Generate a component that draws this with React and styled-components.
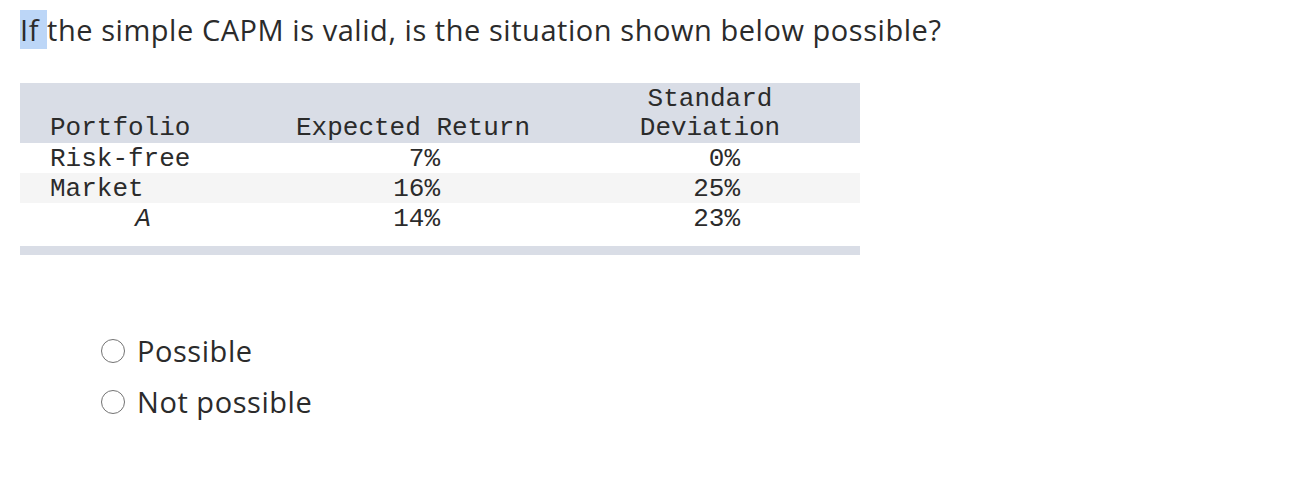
import styled, { createGlobalStyle } from "styled-components";

const GlobalStyle = createGlobalStyle`
  body {
    margin: 0;
    background: #fff;
    color: #2b2b2b;
    font-family: "Open Sans", "Noto Sans", sans-serif;
  }
`;

const Page = styled.div`
  padding: 12px 20px 0 20px;
`;

const Question = styled.p`
  margin: 0;
  font-size: 29px;
  line-height: 36px;
  letter-spacing: 0.55px;
`;

const Mark = styled.span`
  background: #bcd6f7;
`;

const Table = styled.table`
  margin-top: 35px;
  width: 840px;
  table-layout: fixed;
  border-collapse: collapse;
  font-family: "Liberation Mono", "Courier New", monospace;
  font-size: 26px;
  color: #2b2b2b;
`;

const HeadRow = styled.tr`
  background: #d9dde6;
`;

const Row = styled.tr`
  background: ${({ $shade }) => ($shade ? "#f5f5f5" : "#fff")};
`;

const Th = styled.th`
  font-weight: normal;
  line-height: 29px;
  padding: 2px 0 0 0;
  vertical-align: bottom;
  text-align: ${({ $left }) => ($left ? "left" : "center")};
  padding-left: ${({ $left }) => ($left ? "30px" : "0")};
`;

const Td = styled.td`
  line-height: 28px;
  padding: 2px 0 0 0;
  text-align: ${({ $align }) => $align};
  padding-left: ${({ $align }) => ($align === "left" ? "30px" : "0")};
  padding-right: ${({ $align }) => ($align === "right" ? "120px" : "0")};
  font-style: ${({ $italic }) => ($italic ? "italic" : "normal")};
`;

const Spacer = styled.tr`
  height: 13px;
`;

const FootRow = styled.tr`
  background: #d9dde6;
  height: 9px;
`;

const Options = styled.div`
  margin-top: 77px;
  padding-left: 81px;
  display: flex;
  flex-direction: column;
  gap: 14px;
`;

const Option = styled.label`
  display: flex;
  align-items: center;
  gap: 12px;
  font-size: 29px;
  line-height: 37px;
  letter-spacing: 0.55px;
`;

const Radio = styled.span`
  width: 24px;
  height: 24px;
  border: 1.5px solid #737373;
  border-radius: 50%;
  box-sizing: border-box;
  flex: none;
`;

const rows = [
  { name: "Risk-free", ret: "7%", sd: "0%" },
  { name: "Market", ret: "16%", sd: "25%" },
  { name: "A", ret: "14%", sd: "23%", italic: true },
];

export default function App() {
  return (
    <Page>
      <GlobalStyle />
      <Question>
        <Mark>If </Mark>the simple CAPM is valid, is the situation shown below possible?
      </Question>
      <Table>
        <colgroup>
          <col style={{ width: 246 }} />
          <col style={{ width: 294 }} />
          <col style={{ width: 300 }} />
        </colgroup>
        <tbody>
          <HeadRow>
            <Th $left>Portfolio</Th>
            <Th>Expected Return</Th>
            <Th>
              Standard
              <br />
              Deviation
            </Th>
          </HeadRow>
          {rows.map((r, i) => (
            <Row key={r.name} $shade={i === 1}>
              {r.italic ? (
                <Td $align="center" $italic>{r.name}</Td>
              ) : (
                <Td $align="left">{r.name}</Td>
              )}
              <Td $align="right">{r.ret}</Td>
              <Td $align="right">{r.sd}</Td>
            </Row>
          ))}
          <Spacer>
            <td colSpan={3} />
          </Spacer>
          <FootRow>
            <td colSpan={3} />
          </FootRow>
        </tbody>
      </Table>
      <Options>
        <Option>
          <Radio />
          Possible
        </Option>
        <Option>
          <Radio />
          Not possible
        </Option>
      </Options>
    </Page>
  );
}
